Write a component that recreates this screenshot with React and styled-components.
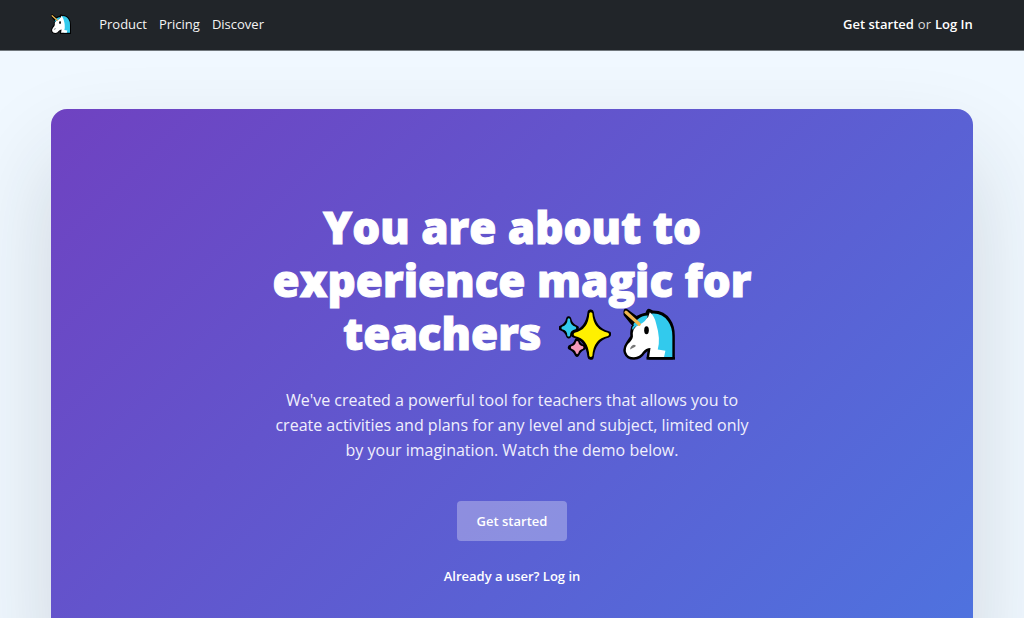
import React from "react";
import styled, { createGlobalStyle } from "styled-components";

const GlobalStyle = createGlobalStyle`
  *, *::before, *::after { box-sizing: border-box; }
  body {
    margin: 0;
    background: #f0f8ff;
    color: #fff;
    font-family: "Segoe UI", "Open Sans", "Noto Sans", sans-serif;
    font-size: 13px;
    line-height: 20px;
  }
`;

const Navbar = styled.header`
  display: flex;
  align-items: center;
  padding: 14px 5% 16px;
  background: #212529;
  border-bottom: 1px solid #70777c;
`;

const Brand = styled.a`
  display: flex;
  margin-right: 28px;
`;

const NavLinks = styled.nav`
  display: flex;
  gap: 12px;
`;

const NavLink = styled.a`
  color: #f4f4f4;
  text-decoration: none;
`;

const Account = styled.div`
  display: flex;
  gap: 4px;
  margin-left: auto;
  color: #dcdddd;
`;

const StrongLink = styled.a`
  color: #fff;
  font-weight: 600;
  text-decoration: none;
`;

const Main = styled.main`
  padding: 58px 5% 80px;
`;

const Hero = styled.section`
  display: flex;
  flex-direction: column;
  align-items: center;
  padding: 92px 24px 64px;
  border-radius: 16px;
  background: linear-gradient(135deg, #6f42c1, #4e73df);
  box-shadow: 0 48px 96px rgba(33, 37, 41, 0.16);
  text-align: center;
`;

const Title = styled.h1`
  margin: 0;
  font-size: 44px;
  font-weight: 800;
  line-height: 53px;
  -webkit-text-stroke: 1px #fff;
`;

const Emoji = styled.svg`
  width: ${(p) => p.$size}px;
  height: ${(p) => p.$size}px;
  margin: 0 ${(p) => p.$space}px;
  vertical-align: -10px;
`;

const Lead = styled.p`
  margin: 28px 0 38px;
  color: #f0effc;
  font-size: 16px;
  line-height: 25px;
`;

const CallToAction = styled.button`
  height: 40px;
  margin-bottom: 25px;
  padding: 0 20px;
  border: 0;
  border-radius: 4px;
  background: rgba(255, 255, 255, 0.3);
  color: #fff;
  font: inherit;
  font-weight: 600;
`;

function Unicorn({ size, space }) {
  return (
    <Emoji $size={size} $space={space} viewBox="9 10 157 157" role="img" aria-label="Unicorn">
      <path d="M18 20L50 43Q62 34 82 31L87 20L98 25Q130 24 146 49Q158 66 158 94V158H88L92 131Q78 131 69 143Q60 158 42 159Q24 159 19 145Q14 133 24 119L39 96Q37 86 40 73L43 60L18 29Z" fill="#000" stroke="#000" strokeWidth="15" strokeLinejoin="round" />
      <path d="M88 158H166V166H80V158Z" fill="#000" />
      <path d="M92 27Q127 23 145 50Q158 68 158 95V158H112L104 120Z" fill="#32caed" />
      <path d="M41 75Q49 63 65 54L85 37L90 23Q105 36 109 57Q123 104 114 135L137 139L133 158H88L92 131Q78 131 69 143Q60 158 42 159Q24 159 19 145Q14 133 24 119Q38 106 39 96Q37 86 41 75Z" fill="#fff" />
      <path d="M51 46Q66 33 84 33Q80 51 59 60Q46 65 38 76Q34 70 42 62Q38 60 45 53Z" fill="#32caed" />
      <path d="M18 23L58 59" stroke="#efb64f" strokeWidth="10" strokeLinecap="round" />
      <ellipse cx="80" cy="77" rx="7" ry="12" fill="#000" />
      <path d="M30 135Q33 123 42 121Q50 121 46 127Z" fill="#777" />
    </Emoji>
  );
}

function Sparkles() {
  return (
    <Emoji $size={52} $space={6} viewBox="20 24 156 156" role="img" aria-label="Sparkles">
      <g fill="#000" stroke="#000" strokeWidth="15" strokeLinejoin="round">
        <path d="M49 56Q53 76 72 84Q53 92 49 108Q44 91 26 84Q45 76 49 56Z" />
        <path d="M74 122Q78 137 94 142Q79 148 74 163Q69 148 54 142Q69 137 74 122Z" />
        <path d="M115 38Q121 91 167 103Q121 115 115 170Q109 115 65 103Q109 91 115 38Z" strokeWidth="19" />
      </g>
      <path d="M46 57Q49 53 53 57Q53 76 70 80Q74 84 70 88Q53 90 53 107Q49 112 45 107Q45 91 29 88Q25 84 29 80Q45 76 46 57Z" fill="#32caed" />
      <path d="M71 125Q74 121 78 125Q79 136 92 139Q95 142 92 146Q79 149 78 160Q74 165 71 160Q69 149 57 146Q54 142 57 139Q69 136 71 125Z" fill="#f59abb" />
      <path d="M111 40Q115 33 120 40Q123 90 167 98Q173 103 167 108Q123 116 120 168Q115 174 111 168Q108 116 67 108Q61 103 67 98Q108 90 111 40Z" fill="#fff000" />
    </Emoji>
  );
}

export default function App() {
  return (
    <>
      <GlobalStyle />
      <Navbar>
        <Brand href="#" aria-label="Home">
          <Unicorn size={20} space={0} />
        </Brand>
        <NavLinks>
          <NavLink href="#product">Product</NavLink>
          <NavLink href="#pricing">Pricing</NavLink>
          <NavLink href="#discover">Discover</NavLink>
        </NavLinks>
        <Account>
          <StrongLink href="#start">Get started</StrongLink>
          <span>or</span>
          <StrongLink href="#login">Log In</StrongLink>
        </Account>
      </Navbar>
      <Main>
        <Hero>
          <Title>
            You are about to
            <br />
            experience magic for
            <br />
            teachers <Sparkles />
            <Unicorn size={52} space={6} />
          </Title>
          <Lead>
            We've created a powerful tool for teachers that allows you to
            <br />
            create activities and plans for any level and subject, limited only
            <br />
            by your imagination. Watch the demo below.
          </Lead>
          <CallToAction type="button">Get started</CallToAction>
          <StrongLink href="#login">Already a user? Log in</StrongLink>
        </Hero>
      </Main>
    </>
  );
}
